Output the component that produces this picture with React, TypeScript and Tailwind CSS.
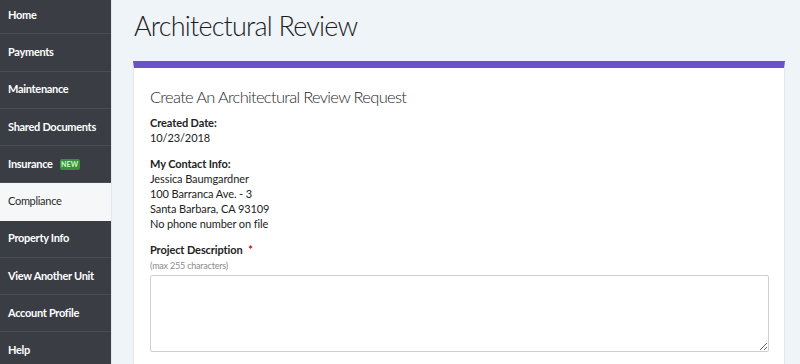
import React from 'react';

const navItems = [
  { label: 'Home' },
  { label: 'Payments' },
  { label: 'Maintenance' },
  { label: 'Shared Documents' },
  { label: 'Insurance', badge: 'NEW' },
  { label: 'Compliance', active: true },
  { label: 'Property Info' },
  { label: 'View Another Unit' },
  { label: 'Account Profile' },
  { label: 'Help' },
];

const Sidebar: React.FC = () => (
  <aside className="w-[112px] shrink-0 bg-[#3a3d44] border-r border-[#e2e7ed]">
    <nav className="-mt-[3px]">
      {navItems.map(item => (
        <div
          key={item.label}
          className={`h-[37.25px] flex items-center pl-2 border-b text-[11px] tracking-[-0.3px] ${
            item.active ? 'bg-[#f5f7f9] text-[#2a2a2a] font-normal border-[#f5f7f9]' : 'font-bold text-white border-[#4a4d54]'
          }`}
        >
          {item.label}
          {item.badge && (
            <span className="ml-[7px] w-[20px] h-[11px] flex items-center justify-center rounded-[2px] bg-[#37913a] text-[7px] font-black text-[#c9f0c5] tracking-[0.2px]">
              {item.badge}
            </span>
          )}
        </div>
      ))}
    </nav>
  </aside>
);

const App: React.FC = () => {
  return (
    <div className="w-[800px] h-[364px] overflow-hidden flex bg-[#eff4f9] text-[#222] font-['Lato',sans-serif]">
      <Sidebar />
      <main className="flex-1 pl-[21px] pr-[15px]">
        <h1 className="text-[27px] font-light leading-none tracking-[-0.8px] mt-[12px] ml-[1px] text-[#1d1d1d]">
          Architectural Review
        </h1>
        <section className="mt-[22px] bg-white border-t-[7px] border-[#6a52c9] border-x border-x-[#e3e8ee] pl-[16px] pr-[15px] pb-4">
          <h2 className="text-[16.5px] font-light tracking-[-0.7px] mt-[18px] leading-[22px] text-[#2a2a2a]">
            Create An Architectural Review Request
          </h2>
          <div className="mt-[7px] text-[11px] leading-[15px] tracking-[-0.1px]">
            <div className="font-bold">Created Date:</div>
            <div>10/23/2018</div>
          </div>
          <div className="mt-[11px] text-[11px] leading-[15px] tracking-[-0.1px]">
            <div className="font-bold">My Contact Info:</div>
            <div>Jessica Baumgardner</div>
            <div>100 Barranca Ave. - 3</div>
            <div>Santa Barbara, CA 93109</div>
            <div>No phone number on file</div>
          </div>
          <div className="mt-[11px]">
            <label className="block text-[11px] leading-[15px] tracking-[-0.1px] font-bold">
              Project Description <span className="text-[#d0021b] ml-[3px]">*</span>
            </label>
            <div className="text-[9px] tracking-[-0.2px] text-[#8a8a8a] mt-[3px] leading-[12px]">(max 255 characters)</div>
            <textarea className="block mt-[3px] w-full h-[77px] border border-[#cfcfcf] rounded-[2px] resize-y outline-none" />
          </div>
        </section>
      </main>
    </div>
  );
};

export default App;
